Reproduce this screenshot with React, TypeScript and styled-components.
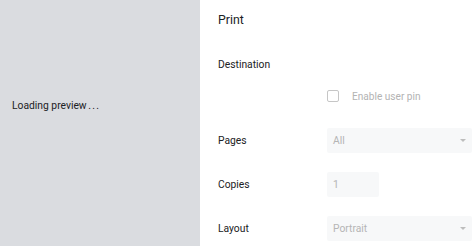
import React from "react";
import styled, { createGlobalStyle } from "styled-components";

const Global = createGlobalStyle`
  html, body { margin: 0; padding: 0; background: #ffffff; }
  body { font-family: Roboto, "Liberation Sans", Arial, sans-serif; color: #202124; }
  * { box-sizing: border-box; }
`;

const Page = styled.div`
  display: flex;
  width: 474px;
  height: 246px;
  overflow: hidden;
`;

const Preview = styled.div`
  width: 200px;
  flex: 0 0 200px;
  background: #dadce0;
  display: flex;
  align-items: center;
  padding: 0 0 36px 12px;
`;

const PreviewMessage = styled.span`
  font-size: 10.3px;
  color: #202124;
`;

const Dots = styled.span`
  letter-spacing: 1.4px;
  margin-left: 1.5px;
`;

const Sidebar = styled.div`
  flex: 1;
  background: #ffffff;
  display: flex;
  flex-direction: column;
  padding: 0 2px 0 18px;
`;

const Header = styled.div`
  height: 39px;
  flex-shrink: 0;
  display: flex;
  align-items: center;
`;

const Title = styled.h1`
  margin: 0;
  font-size: 12.3px;
  font-weight: 400;
  color: #202124;
`;

const Row = styled.div<{ $height: number; $top?: number }>`
  display: grid;
  grid-template-columns: 109px 1fr;
  align-items: center;
  flex-shrink: 0;
  height: ${(p) => p.$height}px;
  margin-top: ${(p) => p.$top ?? 0}px;
`;

const Label = styled.span`
  font-size: 10.3px;
  color: #202124;
`;

const CheckLine = styled.label`
  display: flex;
  align-items: center;
  gap: 13px;
  font-size: 10.1px;
  color: #b3b3b3;
`;

const CheckBox = styled.span`
  width: 12px;
  height: 12px;
  border: 1.5px solid #c6c6c6;
  border-radius: 2px;
`;

const Select = styled.div`
  height: 25px;
  width: 100%;
  background: #f7f8f9;
  border-radius: 2px;
  display: flex;
  align-items: center;
  justify-content: space-between;
  padding: 0 6px 0 6px;
  font-size: 10.3px;
  color: #b5b5b5;
`;

const Arrow = styled.span`
  width: 0;
  height: 0;
  border-left: 3.5px solid transparent;
  border-right: 3.5px solid transparent;
  border-top: 3.5px solid #bdbdbd;
`;

const NumberInput = styled.div`
  height: 25px;
  width: 52px;
  background: #f7f8f9;
  border-radius: 2px;
  display: flex;
  align-items: center;
  padding-left: 6px;
  font-size: 10.3px;
  color: #b5b5b5;
`;

export default function App() {
  return (
    <>
      <Global />
      <Page>
        <Preview>
          <PreviewMessage>
            Loading preview<Dots>...</Dots>
          </PreviewMessage>
        </Preview>
        <Sidebar>
          <Header>
            <Title>Print</Title>
          </Header>
          <Row $height={50}>
            <Label>Destination</Label>
            <span />
          </Row>
          <Row $height={14}>
            <span />
            <CheckLine>
              <CheckBox />
              Enable user pin
            </CheckLine>
          </Row>
          <Row $height={44} $top={15.5}>
            <Label>Pages</Label>
            <Select>
              All
              <Arrow />
            </Select>
          </Row>
          <Row $height={44}>
            <Label>Copies</Label>
            <NumberInput>1</NumberInput>
          </Row>
          <Row $height={44}>
            <Label>Layout</Label>
            <Select>
              Portrait
              <Arrow />
            </Select>
          </Row>
        </Sidebar>
      </Page>
    </>
  );
}
